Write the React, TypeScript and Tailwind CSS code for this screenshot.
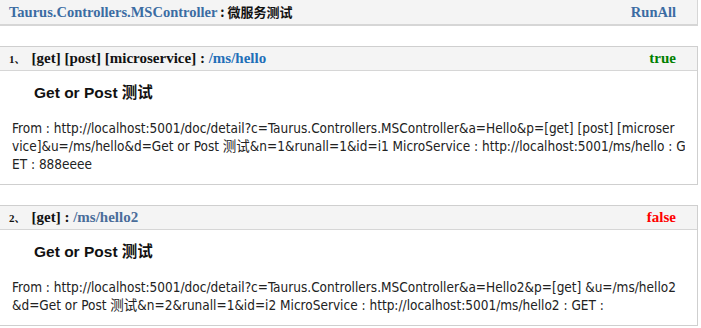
import React from 'react';

type Item = {
  no: number;
  tags: string;
  path: string;
  pathColor: string;
  ok: boolean;
  title: string;
  lines: string[];
};

// lines are kept as they wrap in the original page
const items: Item[] = [
  {
    no: 1,
    tags: '[get] [post] [microservice]',
    path: '/ms/hello',
    pathColor: 'text-[#1f6fb8]',
    ok: true,
    title: 'Get or Post 测试',
    lines: [
      'From : http://localhost:5001/doc/detail?c=Taurus.Controllers.MSController&a=Hello&p=[get] [post] [microser',
      'vice]&u=/ms/hello&d=Get or Post 测试&n=1&runall=1&id=i1 MicroService : http://localhost:5001/ms/hello : G',
      'ET : 888eeee',
    ],
  },
  {
    no: 2,
    tags: '[get]',
    path: '/ms/hello2',
    pathColor: 'text-[#4a6d9a]',
    ok: false,
    title: 'Get or Post 测试',
    lines: [
      'From : http://localhost:5001/doc/detail?c=Taurus.Controllers.MSController&a=Hello2&p=[get] &u=/ms/hello2',
      '&d=Get or Post 测试&n=2&runall=1&id=i2 MicroService : http://localhost:5001/ms/hello2 : GET :',
    ],
  },
];

const serif = "font-['Liberation_Serif','Noto_Serif_CJK_SC',serif]";

const App: React.FC = () => {
  return (
    <div className="w-[701px] h-[328px] bg-white overflow-hidden">
      {/* top bar */}
      <div className="w-[698px] h-[26px] bg-[#f4f4f4] border-b-2 border-r border-[#d6d6d6] flex items-center justify-between pl-[9px] pr-[21px]">
        <div className={`${serif} text-[14.5px] font-bold leading-none`}>
          <span className="text-[#3b6ca3]">Taurus.Controllers.MSController</span>
          <span className="text-[#111] font-['Noto_Sans_CJK_SC',sans-serif] text-[13px]"> : 微服务测试</span>
        </div>
        <span className={`${serif} text-[14.5px] font-bold text-[#3b6ca3] leading-none`}>RunAll</span>
      </div>

      {items.map((it) => (
        <div key={it.no} className="mt-[20px] w-[698px] border-t border-r border-b border-[#cfcfcf]">
          {/* card header */}
          <div className="h-[24px] bg-[#f4f4f4] border-b border-[#d6d6d6] flex items-center justify-between pl-[9px] pr-[21px]">
            <div className={`${serif} text-[15px] font-bold text-[#111] leading-none`}>
              <span className="text-[11px] mr-[6px]">{it.no}、</span>
              <span>{it.tags} : </span>
              <span className={it.pathColor}>{it.path}</span>
            </div>
            <span
              className={`${serif} text-[15px] font-bold leading-none ${
                it.ok ? 'text-[#008000]' : 'text-[#ff0000]'
              }`}
            >
              {it.ok ? 'true' : 'false'}
            </span>
          </div>
          {/* card body */}
          <div className="pl-[12px] pr-[12px] pt-[12px] pb-[11px]">
            <div className="pl-[22px] h-[20px] leading-[20px] text-[15.5px] font-bold text-[#111] font-['Liberation_Sans','Noto_Sans_CJK_SC',sans-serif]">
              {it.title}
            </div>
            <div className="mt-[16px] text-[13.5px] leading-[18px] text-[#222] font-['DejaVu_Sans_Condensed','Noto_Sans_CJK_SC',sans-serif]">
              {it.lines.map((l, i) => (
                <div key={i} className="whitespace-pre overflow-hidden">
                  {l}
                </div>
              ))}
            </div>
          </div>
        </div>
      ))}
    </div>
  );
};

export default App;
